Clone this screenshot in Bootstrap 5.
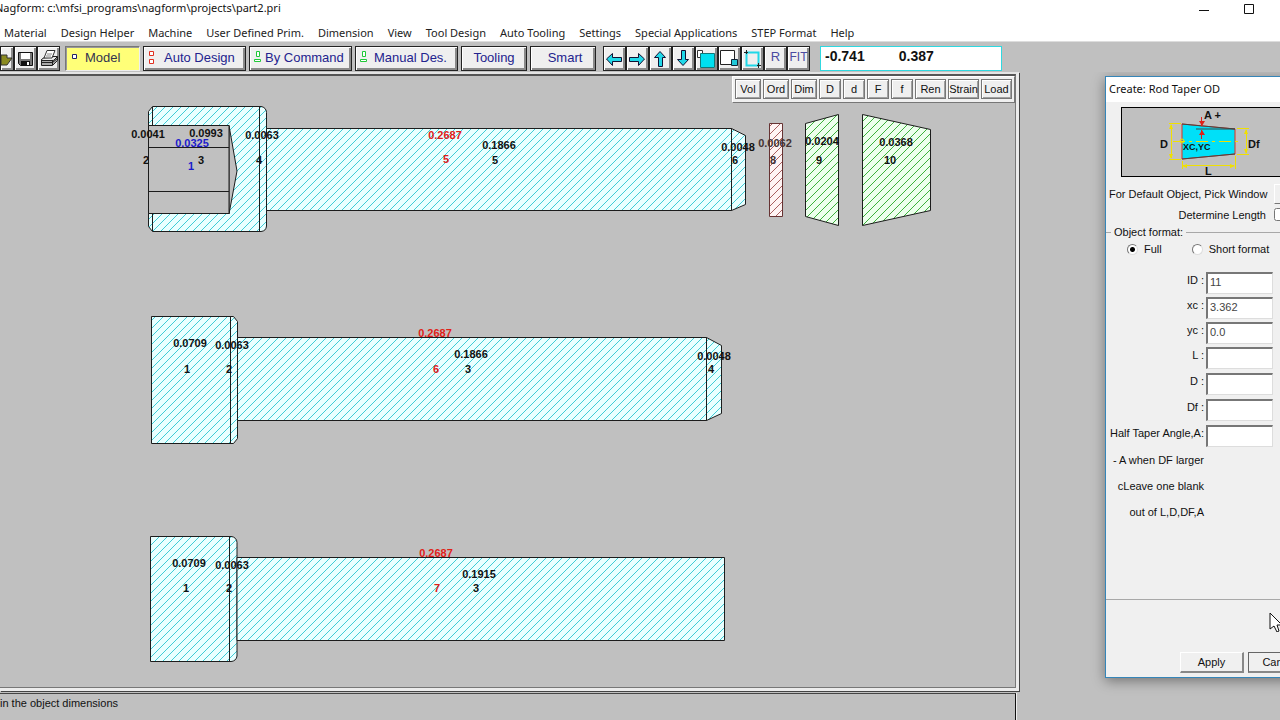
<!DOCTYPE html>
<html lang="en">
<head>
<meta charset="utf-8">
<meta name="viewport" content="width=device-width, initial-scale=1">
<title>Nagform</title>
<link href="https://cdn.jsdelivr.net/npm/bootstrap@5.3.0/dist/css/bootstrap.min.css" rel="stylesheet">
<style>
  body { background: #c0c0c0; color: #111; font: 11px/16px "Liberation Sans", Arial, sans-serif; }
  button { font-family: inherit; color: inherit; }
  .app-head { background: #fff; border-bottom: 1px solid #ddd; font: 11px/16px "Noto Sans", "Segoe UI", sans-serif; }
  .app-title { margin-left: -5px; }
  .win-btn { background: none; border: 0; padding: 0; width: 45px; height: 16px; }
  .menu-list { gap: 14px; padding: 9px 4px 0; }
  .menu-list a { color: #222; text-decoration: none; line-height: 16px; }

  .toolbar { height: 30px; padding-top: 4px; }
  .modes { gap: 3px; margin-left: 5px; }
  .views { padding: 0 10px 0 7px; }
  .tool { height: 25px; padding: 0; background: #efefef; border: 1px solid #222; border-radius: 0;
          box-shadow: inset 1px 1px #fff, inset -2px -2px #8a8a8a; }
  .tool-text { font-size: 13px; line-height: 20px; color: #23238e; width: 103px; padding: 0 0 1px 4px; }
  .tool-text.short { width: 66px; padding-left: 0; }
  .tool-text.on { width: 75px; padding-left: 5px; background: #ffff78; color: #333350; border-color: #777; border-right-color: #eee; border-bottom-color: #eee;
                  box-shadow: inset 1px 1px #999; }
  .tool-icon { width: 23px; color: #4a4aa0; font-size: 13px; }
  .tool-icon.fit { font-size: 12px; }
  .tool-open { width: 14px; justify-content: flex-end; }
  .tool svg { display: block; flex: none; }
  .coords { width: 182px; height: 25px; background: #fff; border: 1px solid #30d8e0; font-size: 14px; padding: 0 4px; line-height: 18px; font-weight: 700; gap: 34px; }

  .frame { border-top: 2px solid #e4e4e4; border-right: 3px solid #ececec; border-bottom: 3px solid #ececec; box-shadow: 1px 1px #444; margin-right: 1px; }
  .sheet { border: solid #777; border-width: 2px 1px 1px 0; border-top-color: #555; }
  .status { height: 27px; margin: 2px 4px 0 0; border-top: 1px solid #444; border-right: 1px solid #111; padding-top: 1px; box-shadow: 1px 0 #eee; }
  .palette { background: #f0f0f0; border: 1px solid #fff; border-bottom-color: #777; border-right-color: #777; padding: 2px 2px 3px; gap: 2px; }
  .palette button { height: 20px; padding: 0; background: #efefef; border: 1px solid #777; box-shadow: inset 1px 1px #fff, inset -1px -1px #a0a0a0; line-height: 16px; width: 22px; }
  .palette .mid { width: 26px; }
  .palette .wide { width: 31px; }
  .cad text { font-size: 11px; font-weight: 700; }

  .side { width: 260px; padding-left: 85px; padding-top: 4px; }
  .dialog-box { width: 250px; background: #f0f0f0; border: 1px solid #3585b8; box-shadow: 0 3px 12px #0006; }
  .dialog-title { background: #fff; height: 25px; padding-left: 3px; font: 11px/24px "Noto Sans", "Segoe UI", sans-serif; }
  .preview { margin: 5px 15px 0; border: 1px solid #000; background: #c0c0c0; height: 70px; }
  .preview svg { display: block; }
  .opts { margin-top: 6px; }
  .opt { gap: 8px; height: 21px; padding-left: 3px; }
  .opt .cap { width: 157px; text-align: right; white-space: nowrap; }
  .pick { width: 40px; height: 20px; background: #f0f0f0; border: 1px solid #fff; border-right-color: #777; border-bottom-color: #777; }
  .group { border: solid #a8a8a8; border-width: 1px 0; height: 375px; }
  .group legend { float: none; width: auto; font-size: 11px; line-height: 14px; padding: 0 3px; margin: 0 0 0 5px; background: #f0f0f0; }
  .radios { padding: 2px 0 0 21px; gap: 30px; height: 33px; }
  .radios input { appearance: none; width: 11px; height: 11px; margin: 0 6px 0 0; border-radius: 50%; border: 1px solid #777; border-right-color: #ddd; border-bottom-color: #ddd; background: #fff; }
  .radios input:checked { background: radial-gradient(circle, #000 0 2px, #fff 3px); }
  .field { gap: 2px; height: 26px; }
  .field.tight { height: 25px; }
  .field label, .field-note { width: 98px; text-align: right; white-space: nowrap; }
  .field-note { height: 26px; line-height: 18px; }
  .field input { width: 67px; height: 22px; border: 2px solid #777; border-right: 1px solid #ddd; border-bottom: 1px solid #ddd; border-radius: 0; padding: 0 2px 3px; background: #fff; color: #444; font: 11px/16px "Liberation Sans", Arial, sans-serif; }
  .actions { padding: 52px 0 4px 74px; gap: 4px; }
  .actions button { width: 64px; height: 21px; padding: 0; background: #f0f0f0; border: 1px solid #fff; border-right: 2px solid #888; border-bottom: 2px solid #888; line-height: 16px; }
  .actions .cancel { border-left-color: #666; border-top-color: #666; }
  .pointer { top: 12px; left: 163px; pointer-events: none; }
</style>
</head>
<body class="vh-100 d-flex flex-column overflow-hidden">

<header class="app-head flex-shrink-0">
  <div class="d-flex justify-content-between">
    <div class="app-title text-nowrap">Nagform: c:\mfsi_programs\nagform\projects\part2.pri</div>
    <div class="d-flex pe-2">
      <button class="win-btn" aria-label="Minimize"><svg width="14" height="14"><path d="M1 8.500h10" stroke="#111"/></svg></button>
      <button class="win-btn" aria-label="Maximize"><svg width="14" height="14"><path d="M1.500 2.500h9v9h-9z" fill="none" stroke="#111"/></svg></button>
    </div>
  </div>
  <nav class="menu-list d-flex text-nowrap">
    <a href="#">Material</a><a href="#">Design Helper</a><a href="#">Machine</a><a href="#">User Defined Prim.</a><a href="#">Dimension</a><a href="#">View</a><a href="#">Tool Design</a><a href="#">Auto Tooling</a><a href="#">Settings</a><a href="#">Special Applications</a><a href="#">STEP Format</a><a href="#">Help</a>
  </nav>
</header>

<div class="toolbar d-flex flex-shrink-0">
  <div class="d-flex">
    <button class="tool tool-open d-flex align-items-center" aria-label="Open"><svg width="12" height="18"><path d="M0 5h6v3h5l-5 7H0z" fill="#8a8a20" stroke="#333"/></svg></button>
    <button class="tool tool-icon d-flex align-items-center justify-content-center" aria-label="Save"><svg width="17" height="18"><path d="M1.500 2.500h14v13h-12l-2-2z" fill="#777" stroke="#111"/><path d="M4 3h9v6H4z" fill="#fff"/><path d="M4 11h9v5H4z" fill="#111"/><path d="M10 12h2v3h-2z" fill="#fff"/></svg></button>
    <button class="tool tool-icon d-flex align-items-center justify-content-center" aria-label="Print"><svg width="20" height="20"><path d="M2.500 10.500l4-3h12l-4 4h-12zM2.500 10.500v6h11l5-5v-4M2.500 13.500h11l5-4M13.500 11v5" fill="#aaa" stroke="#222"/><path d="M5 9l3-7.500h8L13 9z" fill="#fff" stroke="#333"/><path d="M8 5h5M7 7h5" stroke="#888"/></svg></button>
  </div>
  <div class="modes d-flex">
    <button class="tool tool-text on d-flex align-items-center"><svg width="14" height="12"><path d="M1.500 2.500h4v4h-4z" fill="#fff" stroke="#226"/></svg>Model</button>
    <button class="tool tool-text d-flex align-items-center"><svg width="16" height="16"><path d="M1.500 1.500h4v4h-4zM1.500 9.500h4v4h-4z" fill="#fff" stroke="#e03020"/></svg>Auto Design</button>
    <button class="tool tool-text d-flex align-items-center"><svg width="11" height="16"><path d="M2.500 1.500h3v5h-3zM.5 9.500h6v2h-6z" fill="#fff" stroke="#20c838"/></svg>By Command</button>
    <button class="tool tool-text d-flex align-items-center"><svg width="14" height="16"><path d="M2.500 1.500h3v5h-3zM.5 9.500h6v2h-6z" fill="#fff" stroke="#20c838"/></svg>Manual Des.</button>
    <button class="tool tool-text short">Tooling</button>
    <button class="tool tool-text short ps-1">Smart</button>
  </div>
  <div class="views d-flex">
    <button class="tool tool-icon" aria-label="Left"><svg width="20" height="20" viewBox="0 2 20 20"><path d="M2.500 12l6-5.500v4h9v4h-9v4z" fill="#20d8e8" stroke="#113"/></svg></button>
    <button class="tool tool-icon" aria-label="Right"><svg width="20" height="20" viewBox="0 2 20 20"><path d="M17.500 12l-6-5.500v4h-9v4h9v4z" fill="#20d8e8" stroke="#113"/></svg></button>
    <button class="tool tool-icon" aria-label="Up"><svg width="20" height="20" viewBox="0 2 20 20"><path d="M10 4.500l-5.500 6h4v9h4v-9h3z" fill="#20d8e8" stroke="#113"/></svg></button>
    <button class="tool tool-icon" aria-label="Down"><svg width="20" height="20" viewBox="0 2 20 20"><path d="M10 18.500l-5.500-6h4v-9h4v9h3z" fill="#20d8e8" stroke="#113"/></svg></button>
    <button class="tool tool-icon" aria-label="Zoom in"><svg width="20" height="20" viewBox="0 2 20 20"><path d="M1.500 3.500h5v7h-5z" fill="#fff" stroke="#333"/><path d="M4.500 6.500h14v14h-14z" fill="#00e0f0" stroke="#177"/></svg></button>
    <button class="tool tool-icon" aria-label="Zoom out"><svg width="20" height="20" viewBox="0 2 20 20"><path d="M1.500 3.500h14v14h-14z" fill="#fff" stroke="#222"/><path d="M12.500 12.500h6v6h-6z" fill="#20c8d8" stroke="#123"/></svg></button>
    <button class="tool tool-icon" aria-label="Zoom window"><svg width="20" height="20" viewBox="0 2 20 20"><path d="M4.500 5.500h12v13h-12z" fill="none" stroke="#20d8e8" stroke-width="2"/><path d="M2 5.500h4M4.500 3v4M15 18.500h4M16.500 16v5" stroke="#222"/></svg></button>
    <button class="tool tool-icon pb-1">R</button>
    <button class="tool tool-icon fit pb-1">FIT</button>
  </div>
  <div class="coords d-flex"><span>-0.741</span><span>0.387</span></div>
</div>

<div class="flex-fill d-flex overflow-hidden">
  <main class="flex-fill d-flex flex-column">
    <div class="frame flex-fill d-flex">
      <div class="sheet flex-fill position-relative d-flex overflow-hidden">
        <svg class="cad flex-fill" width="100%" height="100%" role="img" aria-label="Forging stages">
          <defs>
            <pattern id="hc" width="8" height="8" patternUnits="userSpaceOnUse"><rect width="8" height="8" fill="#e9ffff"/><path d="M-1 9L9-1M-1 1L1-1M7 9L9 7" stroke="#40ccd6"/></pattern>
            <pattern id="hg" width="8" height="8" patternUnits="userSpaceOnUse"><rect width="8" height="8" fill="#ecffec"/><path d="M-1 9L9-1M-1 1L1-1M7 9L9 7" stroke="#3cb03c"/></pattern>
            <pattern id="hr" width="8" height="8" patternUnits="userSpaceOnUse"><rect width="8" height="8" fill="#fff4f4"/><path d="M-1 9L9-1M-1 1L1-1M7 9L9 7" stroke="#a86060"/></pattern>
          </defs>
          <g transform="translate(0 -76)">
            <g stroke="#1c1c1c" fill="url(#hc)">
              <path d="M152.500 106.500H261a6 6 0 0 1 5.500 6V226a6 6 0 0 1-5.500 5.500H152.500l-4-5V111.500z"/>
              <path d="M152.500 107v18M152.500 214v17M259.500 107v124"/>
              <path d="M229 125.500l8 45.500-8 43z" fill="#c0c0c0"/>
              <path d="M148.500 125.500h80.500v88h-80.500z" fill="#c0c0c0"/>
              <path d="M148.500 147.500h80.500M148.500 191.500h80.500"/>
              <path d="M266.500 128.500h465v82h-465zM731.500 128.500l14 7v69l-14 6z"/>
              <path d="M769.500 123.500h13v93h-13z" fill="url(#hr)" stroke="#633"/>
              <path d="M805.500 123.500l33-9v111l-33-9zM862.500 114.500l68 15v81l-68 15z" fill="url(#hg)"/>
              <path d="M151.500 316.500h82l4 5v117l-4 5h-82zM230.500 317v126"/>
              <path d="M237.500 337.500h469v83h-469zM706.500 337.500l15 8v68l-15 7z"/>
              <path d="M150.500 536.500H231a6 6 0 0 1 6 6V656a6 6 0 0 1-6 5.500h-80.500zM229.500 537v124"/>
              <path d="M237 557.500h487.500v83H237z"/>
            </g>
            <g fill="#111" text-anchor="middle">
              <text x="148" y="138">0.0041</text><text x="206" y="137">0.0993</text><text x="262" y="139">0.0063</text>
              <text x="146" y="164">2</text><text x="201" y="164">3</text><text x="259" y="164">4</text>
              <text x="499" y="149">0.1866</text><text x="495" y="164">5</text>
              <text x="738" y="151">0.0048</text><text x="735" y="164">6</text>
              <text x="775" y="147" fill="#433">0.0062</text><text x="773" y="164" fill="#433">8</text>
              <text x="822" y="145">0.0204</text><text x="819" y="164">9</text>
              <text x="896" y="146">0.0368</text><text x="890" y="164">10</text>
              <text x="190" y="347">0.0709</text><text x="187" y="373">1</text><text x="232" y="349">0.0063</text><text x="229" y="373">2</text>
              <text x="471" y="358">0.1866</text><text x="468" y="373">3</text><text x="714" y="360">0.0048</text><text x="711" y="373">4</text>
              <text x="189" y="567">0.0709</text><text x="186" y="592">1</text><text x="232" y="569">0.0063</text><text x="229" y="592">2</text>
              <text x="479" y="578">0.1915</text><text x="476" y="592">3</text>
              <g fill="#1a1acc"><text x="192" y="147">0.0325</text><text x="191" y="170">1</text></g>
              <g fill="#e02018"><text x="445" y="139">0.2687</text><text x="446" y="163">5</text><text x="435" y="337">0.2687</text><text x="436" y="373">6</text><text x="436" y="557">0.2687</text><text x="437" y="592">7</text></g>
            </g>
          </g>
        </svg>
        <div class="palette position-absolute top-0 end-0 d-flex">
          <button class="mid">Vol</button><button class="mid">Ord</button><button class="mid">Dim</button><button>D</button><button>d</button><button>F</button><button>f</button><button class="wide">Ren</button><button class="wide">Strain</button><button class="wide">Load</button>
        </div>
      </div>
    </div>
    <footer class="status flex-shrink-0">in the object dimensions</footer>
  </main>

  <aside class="side flex-shrink-0">
    <form class="dialog-box" onsubmit="return false">
      <div class="dialog-title">Create: Rod Taper OD</div>
      <div class="preview">
        <svg width="216" height="68" font-size="11" font-weight="700" fill="#111">
          <path d="M60 16l53 5v25l-53 5z" fill="#00e0f8" stroke="#e03020"/>
          <path d="M60 16l53 5M60 51l53-5M74 21h39" stroke="#444" fill="none"/>
          <g stroke="#f0e000" fill="none"><path d="M47 15.500h12M47 51.500h12M49.500 17v33M115 20.500h12M115 46.500h12M124.500 22v23M60.500 53v8M113.500 48v13M61 57.500h51"/><path d="M51 33.500h68" stroke-dasharray="12 4 3 4"/><circle cx="60" cy="33" r="2"/></g>
          <path d="M49 16l-2 5h4zM49 51l-2-5h4zM124 21l-2 5h4zM124 46l-2-5h4zM60 58l5-2v4zM113 58l-5-2v4z" fill="#f0e000"/>
          <path d="M79.500 9v9M79.500 22v9" stroke="#e02018"/><path d="M80 18l-3-5h6zM80 22l-3 5h6z" fill="#e02018"/>
          <text x="82" y="11">A +</text><text x="38" y="40">D</text><text x="126" y="40">Df</text><text x="61" y="42" font-size="9">XC,YC</text><text x="83" y="67">L</text>
        </svg>
      </div>
      <div class="opts">
        <div class="opt d-flex align-items-center"><label class="cap" for="pick">For Default Object, Pick Window</label><button id="pick" class="pick" aria-label="Pick Window"></button></div>
        <div class="opt d-flex align-items-center"><label class="cap" for="len">Determine Length</label><input type="checkbox" id="len"></div>
      </div>
      <fieldset class="group">
        <legend>Object format:</legend>
        <div class="radios d-flex align-items-start">
          <label class="d-flex align-items-center"><input type="radio" name="fmt" checked>Full</label>
          <label class="d-flex align-items-center"><input type="radio" name="fmt">Short format</label>
        </div>
        <div class="field tight d-flex"><label for="f1">ID :</label><input id="f1" value="11"></div>
        <div class="field tight d-flex"><label for="f2">xc :</label><input id="f2" value="3.362"></div>
        <div class="field tight d-flex"><label for="f3">yc :</label><input id="f3" value="0.0"></div>
        <div class="field d-flex"><label for="f4">L :</label><input id="f4"></div>
        <div class="field d-flex"><label for="f5">D :</label><input id="f5"></div>
        <div class="field d-flex"><label for="f6">Df :</label><input id="f6"></div>
        <div class="field d-flex"><label for="f7">Half Taper Angle,A:</label><input id="f7"></div>
        <div class="field-note">- A when DF larger</div>
        <div class="field-note">cLeave one blank</div>
        <div class="field-note">out of L,D,DF,A</div>
      </fieldset>
      <div class="actions d-flex position-relative">
        <button>Apply</button><button class="cancel">Cancel</button>
        <svg class="pointer position-absolute" width="14" height="20"><path d="M1 1v16l4-3 3 6 2-1-2-6h5z" fill="#fff" stroke="#111"/></svg>
      </div>
    </form>
  </aside>
</div>
<script src="https://cdn.jsdelivr.net/npm/bootstrap@5.3.0/dist/js/bootstrap.bundle.min.js"></script>
</body>
</html>
